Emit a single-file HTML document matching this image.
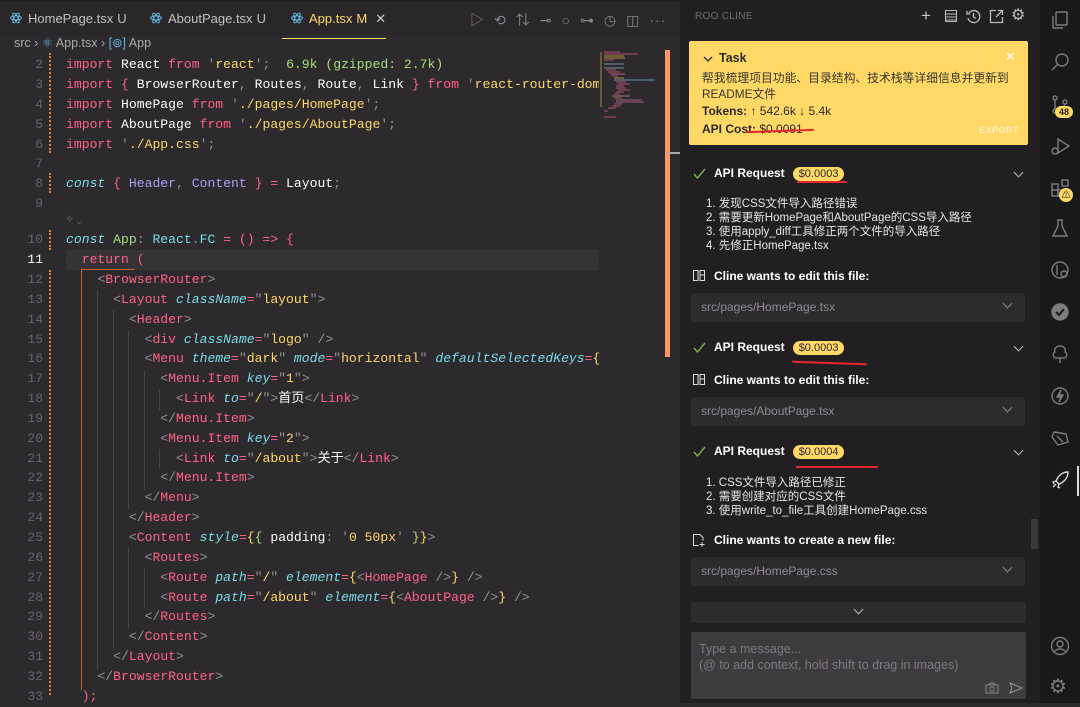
<!DOCTYPE html>
<html><head><meta charset="utf-8"><style>
*{margin:0;padding:0;box-sizing:border-box}
body{width:1080px;height:703px;overflow:hidden;background:#2d2a2e;font-family:"Liberation Sans","Noto Sans CJK SC",sans-serif;position:relative}
.abs{position:absolute}
#tabs{left:0;top:0;width:680px;height:35px;background:#2a272b;border-top:2px solid #1e1c1f}
.tab{position:absolute;top:9px;font-size:13px;color:#c1c0c0;white-space:nowrap}
.tab .u{color:#bdbdbd;margin-left:4px}
.react{display:inline-block;width:12px;height:12px;vertical-align:-1px;margin-right:6px}
#bc{left:14px;top:35px;font-size:12.5px;color:#a9a8a9}
.ln{position:absolute;left:0;width:43px;text-align:right;font-family:"Liberation Mono",monospace;font-size:13px;color:#666468;line-height:20px}
.cl{position:absolute;left:66px;font-family:"Liberation Mono","Noto Sans CJK SC",monospace;font-size:13.1px;line-height:20px;color:#fcfcfa;white-space:pre}
.k{color:#ff6188}.s{color:#ffd866}.c{color:#78dce8;font-style:italic}.p{color:#939293}.g{color:#a9dc76}.v{color:#ab9df2}.t{color:#ff6188}.o{color:#fc9867}.cy{color:#78dce8}
#panel{left:680px;top:0;width:360px;height:703px;background:#221f22}
#act{left:1040px;top:0;width:40px;height:703px;background:#19181a}
.ph{color:#fff;font-weight:bold;font-size:12px}
.pill{display:inline-block;background:#ffd866;color:#2d2a2e;font-size:11px;border-radius:9px;padding:1px 6px;margin-left:8px;font-weight:normal}
.box{position:absolute;left:691px;width:334px;height:29px;background:#2e2b2f;border-radius:2px;color:#8e8c8f;font-size:12px;padding:7px 10px}
.chev{position:absolute;width:7px;height:7px;border-right:1.3px solid #bbb;border-bottom:1.3px solid #bbb;transform:rotate(45deg)}
.ol{position:absolute;left:706px;font-size:11.5px;color:#e6e6e6;line-height:14px}
.red{position:absolute;height:2px;background:#e8262a;border-radius:2px}
.ai{position:absolute;left:1050px;width:20px;height:20px;stroke:#7c7b7d;fill:none;stroke-width:1.4}
.ck{position:absolute;left:693px}
</style></head><body>
<div id="tabs" class="abs">
 <div class="tab" style="left:10px"><svg class="react" viewBox="0 0 12 12"><g fill="none" stroke="#5fb3d9" stroke-width="1"><ellipse cx="6" cy="6" rx="5.5" ry="2.1"/><ellipse cx="6" cy="6" rx="5.5" ry="2.1" transform="rotate(60 6 6)"/><ellipse cx="6" cy="6" rx="5.5" ry="2.1" transform="rotate(120 6 6)"/></g></svg>HomePage.tsx<span class="u">U</span></div>
 <div class="tab" style="left:150px"><svg class="react" viewBox="0 0 12 12"><g fill="none" stroke="#5fb3d9" stroke-width="1"><ellipse cx="6" cy="6" rx="5.5" ry="2.1"/><ellipse cx="6" cy="6" rx="5.5" ry="2.1" transform="rotate(60 6 6)"/><ellipse cx="6" cy="6" rx="5.5" ry="2.1" transform="rotate(120 6 6)"/></g></svg>AboutPage.tsx<span class="u">U</span></div>
 <div class="tab" style="left:291px;color:#ffd866"><svg class="react" viewBox="0 0 12 12"><g fill="none" stroke="#5fb3d9" stroke-width="1"><ellipse cx="6" cy="6" rx="5.5" ry="2.1"/><ellipse cx="6" cy="6" rx="5.5" ry="2.1" transform="rotate(60 6 6)"/><ellipse cx="6" cy="6" rx="5.5" ry="2.1" transform="rotate(120 6 6)"/></g></svg>App.tsx<span class="u" style="color:#ffd866">M</span><span style="color:#ccc;margin-left:8px">✕</span></div>
 <div class="abs" style="left:470px;top:8px;color:#8a888b;font-size:14px;letter-spacing:10px;white-space:nowrap">▷⟲⇅⊸○⊶◷◫<span style="letter-spacing:1px">···</span></div>
</div>
<div class="abs" style="left:282px;top:38px;width:104px;height:1px;background:#ffd866"></div>
<div id="bc" class="abs">src › <span style="color:#5fb3d9">⚛</span> App.tsx › <span style="color:#5fb3d9">[⊚]</span> App</div>
<div class="abs" style="left:49px;top:53px;width:2px;height:100px;border-left:2px dotted #e0843c"></div>
<div class="abs" style="left:49px;top:173px;width:2px;height:20px;border-left:2px dotted #e0843c"></div>
<div class="abs" style="left:49px;top:230px;width:2px;height:20px;border-left:2px dotted #e0843c"></div>
<div class="abs" style="left:49px;top:270px;width:2px;height:425px;border-left:2px dotted #e0843c"></div>
<div class="abs" style="left:66px;top:250px;width:533px;height:20px;background:#363337"></div>
<div class="abs" style="left:81px;top:270px;width:1px;height:420px;background:#c1662f"></div>
<div class="abs" style="left:81px;top:269px;width:54px;height:1px;background:#c1662f"></div>
<div class="abs" style="left:97px;top:290px;width:1px;height:380px;background:#444"></div>
<div class="abs" style="left:113px;top:310px;width:1px;height:340px;background:#444"></div>
<div class="abs" style="left:128px;top:330px;width:1px;height:180px;background:#444"></div>
<div class="abs" style="left:144px;top:370px;width:1px;height:120px;background:#444"></div>
<div class="abs" style="left:159px;top:390px;width:1px;height:20px;background:#444"></div>
<div class="abs" style="left:159px;top:449px;width:1px;height:20px;background:#444"></div>
<div class="abs" style="left:128px;top:548px;width:1px;height:80px;background:#444"></div>
<div class="abs" style="left:144px;top:568px;width:1px;height:40px;background:#444"></div>

<div class="ln" style="top:55px">2</div><div class="cl" style="top:55px"><span class="k">import</span> React <span class="k">from</span> <span class="p">'</span><span class="s">react</span><span class="p">';</span>  <span class="g">6.9k (gzipped: 2.7k)</span></div>
<div class="ln" style="top:75px">3</div><div class="cl" style="top:75px"><span class="k">import</span> <span class="k">{</span> BrowserRouter<span class="p">,</span> Routes<span class="p">,</span> Route<span class="p">,</span> Link <span class="k">}</span> <span class="k">from</span> <span class="p">'</span><span class="s">react-router-dom</span></div>
<div class="ln" style="top:95px">4</div><div class="cl" style="top:95px"><span class="k">import</span> HomePage <span class="k">from</span> <span class="p">'</span><span class="s">./pages/HomePage</span><span class="p">';</span></div>
<div class="ln" style="top:115px">5</div><div class="cl" style="top:115px"><span class="k">import</span> AboutPage <span class="k">from</span> <span class="p">'</span><span class="s">./pages/AboutPage</span><span class="p">';</span></div>
<div class="ln" style="top:135px">6</div><div class="cl" style="top:135px"><span class="k">import</span> <span class="p">'</span><span class="s">./App.css</span><span class="p">';</span></div>
<div class="ln" style="top:154px">7</div>
<div class="ln" style="top:174px">8</div><div class="cl" style="top:174px"><span class="c">const</span> <span class="k">{</span> <span class="v">Header</span><span class="p">,</span> <span class="v">Content</span> <span class="k">}</span> <span class="k">=</span> Layout<span class="p">;</span></div>
<div class="ln" style="top:194px">9</div>
<div class="abs" style="left:66px;top:213px;font-size:11px;color:#6d6b6e">⟡ ⌄</div>
<div class="ln" style="top:230px">10</div><div class="cl" style="top:230px"><span class="c">const</span> <span class="g">App</span><span class="p">:</span> <span class="cy">React</span><span class="p">.</span><span class="cy">FC</span> <span class="k">=</span> <span class="k">()</span> <span class="k">=&gt;</span> <span class="k">{</span></div>
<div class="ln" style="top:250px;color:#fcfcfa">11</div><div class="cl" style="top:250px">  <span class="k">return</span> <span class="k">(</span></div>
<div class="ln" style="top:270px">12</div><div class="cl" style="top:270px">    <span class="p">&lt;</span><span class="t">BrowserRouter</span><span class="p">&gt;</span></div>
<div class="ln" style="top:290px">13</div><div class="cl" style="top:290px">      <span class="p">&lt;</span><span class="t">Layout</span> <span class="c">className</span><span class="k">=</span><span class="p">"</span><span class="s">layout</span><span class="p">"&gt;</span></div>
<div class="ln" style="top:310px">14</div><div class="cl" style="top:310px">        <span class="p">&lt;</span><span class="t">Header</span><span class="p">&gt;</span></div>
<div class="ln" style="top:330px">15</div><div class="cl" style="top:330px">          <span class="p">&lt;</span><span class="t">div</span> <span class="c">className</span><span class="k">=</span><span class="p">"</span><span class="s">logo</span><span class="p">" /&gt;</span></div>
<div class="ln" style="top:349px">16</div><div class="cl" style="top:349px">          <span class="p">&lt;</span><span class="t">Menu</span> <span class="c">theme</span><span class="k">=</span><span class="p">"</span><span class="s">dark</span><span class="p">"</span> <span class="c">mode</span><span class="k">=</span><span class="p">"</span><span class="s">horizontal</span><span class="p">"</span> <span class="c">defaultSelectedKeys</span><span class="k">=</span><span class="s">{</span></div>
<div class="ln" style="top:369px">17</div><div class="cl" style="top:369px">            <span class="p">&lt;</span><span class="t">Menu.Item</span> <span class="c">key</span><span class="k">=</span><span class="p">"</span><span class="s">1</span><span class="p">"&gt;</span></div>
<div class="ln" style="top:389px">18</div><div class="cl" style="top:389px">              <span class="p">&lt;</span><span class="t">Link</span> <span class="c">to</span><span class="k">=</span><span class="p">"</span><span class="s">/</span><span class="p">"&gt;</span>首页<span class="p">&lt;/</span><span class="t">Link</span><span class="p">&gt;</span></div>
<div class="ln" style="top:409px">19</div><div class="cl" style="top:409px">            <span class="p">&lt;/</span><span class="t">Menu.Item</span><span class="p">&gt;</span></div>
<div class="ln" style="top:429px">20</div><div class="cl" style="top:429px">            <span class="p">&lt;</span><span class="t">Menu.Item</span> <span class="c">key</span><span class="k">=</span><span class="p">"</span><span class="s">2</span><span class="p">"&gt;</span></div>
<div class="ln" style="top:449px">21</div><div class="cl" style="top:449px">              <span class="p">&lt;</span><span class="t">Link</span> <span class="c">to</span><span class="k">=</span><span class="p">"</span><span class="s">/about</span><span class="p">"&gt;</span>关于<span class="p">&lt;/</span><span class="t">Link</span><span class="p">&gt;</span></div>
<div class="ln" style="top:468px">22</div><div class="cl" style="top:468px">            <span class="p">&lt;/</span><span class="t">Menu.Item</span><span class="p">&gt;</span></div>
<div class="ln" style="top:488px">23</div><div class="cl" style="top:488px">          <span class="p">&lt;/</span><span class="t">Menu</span><span class="p">&gt;</span></div>
<div class="ln" style="top:508px">24</div><div class="cl" style="top:508px">        <span class="p">&lt;/</span><span class="t">Header</span><span class="p">&gt;</span></div>
<div class="ln" style="top:528px">25</div><div class="cl" style="top:528px">        <span class="p">&lt;</span><span class="t">Content</span> <span class="c">style</span><span class="k">=</span><span class="s">{</span><span class="g">{</span> padding<span class="p">:</span> <span class="p">'</span><span class="s">0 50px</span><span class="p">'</span> <span class="g">}</span><span class="s">}</span><span class="p">&gt;</span></div>
<div class="ln" style="top:548px">26</div><div class="cl" style="top:548px">          <span class="p">&lt;</span><span class="t">Routes</span><span class="p">&gt;</span></div>
<div class="ln" style="top:568px">27</div><div class="cl" style="top:568px">            <span class="p">&lt;</span><span class="t">Route</span> <span class="c">path</span><span class="k">=</span><span class="p">"</span><span class="s">/</span><span class="p">"</span> <span class="c">element</span><span class="k">=</span><span class="s">{</span><span class="p">&lt;</span><span class="t">HomePage</span> <span class="p">/&gt;</span><span class="s">}</span> <span class="p">/&gt;</span></div>
<div class="ln" style="top:588px">28</div><div class="cl" style="top:588px">            <span class="p">&lt;</span><span class="t">Route</span> <span class="c">path</span><span class="k">=</span><span class="p">"</span><span class="s">/about</span><span class="p">"</span> <span class="c">element</span><span class="k">=</span><span class="s">{</span><span class="p">&lt;</span><span class="t">AboutPage</span> <span class="p">/&gt;</span><span class="s">}</span> <span class="p">/&gt;</span></div>
<div class="ln" style="top:607px">29</div><div class="cl" style="top:607px">          <span class="p">&lt;/</span><span class="t">Routes</span><span class="p">&gt;</span></div>
<div class="ln" style="top:627px">30</div><div class="cl" style="top:627px">        <span class="p">&lt;/</span><span class="t">Content</span><span class="p">&gt;</span></div>
<div class="ln" style="top:647px">31</div><div class="cl" style="top:647px">      <span class="p">&lt;/</span><span class="t">Layout</span><span class="p">&gt;</span></div>
<div class="ln" style="top:667px">32</div><div class="cl" style="top:667px">    <span class="p">&lt;/</span><span class="t">BrowserRouter</span><span class="p">&gt;</span></div>
<div class="ln" style="top:687px">33</div><div class="cl" style="top:687px">  <span class="k">);</span></div>
<div class="abs" style="left:599px;top:40px;width:81px;height:663px;background:#2d2a2e"></div>
<svg class="abs" style="left:600px;top:50px" width="60" height="70">
<g stroke-width="1">
<line x1="1" y1="2" x2="1" y2="57" stroke="#a38a3b"/>
<line x1="4" y1="2" x2="20" y2="2" stroke="#b05070"/><line x1="4" y1="4" x2="38" y2="4" stroke="#b05070"/><line x1="4" y1="6" x2="24" y2="6" stroke="#b09040"/><line x1="4" y1="8" x2="25" y2="8" stroke="#b09040"/><line x1="4" y1="10" x2="14" y2="10" stroke="#b05070"/>
<line x1="4" y1="14" x2="24" y2="14" stroke="#6a90a0"/><line x1="4" y1="18" x2="24" y2="18" stroke="#6a90a0"/>
<line x1="6" y1="20" x2="16" y2="20" stroke="#b05070"/><line x1="8" y1="22" x2="20" y2="22" stroke="#b05070"/><line x1="10" y1="24" x2="25" y2="24" stroke="#b06070"/><line x1="12" y1="26" x2="18" y2="26" stroke="#b05070"/><line x1="14" y1="28" x2="24" y2="28" stroke="#b09040"/><line x1="14" y1="30" x2="55" y2="30" stroke="#6a90a0"/><line x1="16" y1="32" x2="26" y2="32" stroke="#b05070"/><line x1="18" y1="34" x2="30" y2="34" stroke="#b05070"/><line x1="16" y1="36" x2="24" y2="36" stroke="#b05070"/><line x1="16" y1="38" x2="26" y2="38" stroke="#b05070"/><line x1="18" y1="40" x2="30" y2="40" stroke="#b05070"/><line x1="16" y1="42" x2="24" y2="42" stroke="#b05070"/><line x1="14" y1="44" x2="20" y2="44" stroke="#b05070"/><line x1="12" y1="46" x2="30" y2="46" stroke="#a08070"/><line x1="14" y1="48" x2="22" y2="48" stroke="#b05070"/><line x1="16" y1="50" x2="42" y2="50" stroke="#a06080"/><line x1="16" y1="52" x2="44" y2="52" stroke="#a06080"/><line x1="14" y1="54" x2="22" y2="54" stroke="#b05070"/><line x1="12" y1="56" x2="20" y2="56" stroke="#b05070"/><line x1="8" y1="58" x2="16" y2="58" stroke="#b05070"/><line x1="4" y1="61" x2="8" y2="61" stroke="#b05070"/><line x1="4" y1="67" x2="16" y2="67" stroke="#b05070"/>
</g></svg>
<div class="abs" style="left:665px;top:50px;width:5px;height:307px;background:#fc9867"></div>
<div class="abs" style="left:667px;top:152px;width:13px;height:2px;background:#aaa"></div>

<div id="panel" class="abs"></div>
<div class="abs" style="left:695px;top:11px;font-size:10px;color:#6f6d70;letter-spacing:.3px">ROO CLINE</div>
<div class="abs" style="left:921px;top:6px;font-size:17px;color:#c5c5c5">+</div>
<svg class="abs" style="left:944px;top:9px" width="14" height="14" stroke="#bbb" fill="none"><rect x="1.5" y="1.5" width="11" height="11"/><line x1="2" y1="5" x2="12" y2="5"/><line x1="2" y1="8" x2="12" y2="8"/><line x1="2" y1="11" x2="12" y2="11"/></svg>
<svg class="abs" style="left:966px;top:9px" width="15" height="15" stroke="#bbb" fill="none" stroke-width="1.3"><path d="M3 4A6 6 0 1 1 2 9"/><path d="M1 2v3h3"/><path d="M7.5 4v4l2.5 1.5"/></svg>
<svg class="abs" style="left:989px;top:9px" width="15" height="15" stroke="#bbb" fill="none" stroke-width="1.3"><path d="M7 1.5H1.5v12h12V8"/><path d="M9 1.5h4.5V6M13.5 1.5L7 8"/></svg>
<div class="abs" style="left:1011px;top:5px;font-size:16px;color:#bbb">⚙</div>

<div class="abs" style="left:689px;top:41px;width:339px;height:104px;background:#ffd866;border-radius:2px"></div>
<svg class="abs" style="left:703px;top:55px" width="10" height="8" stroke="#2d2a2e" fill="none" stroke-width="1.3"><path d="M1 2l4 4 4-4"/></svg>
<div class="abs" style="left:719px;top:51px;font-size:12.5px;color:#2d2a2e;font-weight:bold">Task</div>
<div class="abs" style="left:1005px;top:49px;font-size:13px;color:#fff">✕</div>
<div class="abs" style="left:702px;top:70px;white-space:nowrap;font-size:11.8px;line-height:16px;color:#3a3530">帮我梳理项目功能、目录结构、技术栈等详细信息并更新到<br>README文件</div>
<div class="abs" style="left:702px;top:104px;font-size:12px;color:#2d2a2e"><b>Tokens:</b> ↑ 542.6k ↓ 5.4k</div>
<div class="abs" style="left:702px;top:122px;font-size:12px;color:#2d2a2e"><b>API Cost:</b> $0.0091</div>
<div class="abs" style="left:979px;top:125px;font-size:9px;color:#fff1c0;font-weight:bold;letter-spacing:.5px">EXPORT</div>
<div class="red" style="left:746px;top:130px;width:68px;transform:rotate(-2deg)"></div>

<svg class="ck" style="top:168px" width="13" height="11" stroke="#7ab34f" fill="none" stroke-width="1.4"><path d="M1 6l3.5 4L12 1"/></svg>
<div class="abs ph" style="left:714px;top:166px">API Request<span class="pill">$0.0003</span></div>
<div class="chev" style="left:1015px;top:169px"></div>
<div class="red" style="left:797px;top:181px;width:50px"></div>
<div class="ol" style="top:197px">1. 发现CSS文件导入路径错误<br>2. 需要更新HomePage和AboutPage的CSS导入路径<br>3. 使用apply_diff工具修正两个文件的导入路径<br>4. 先修正HomePage.tsx</div>
<svg class="abs" style="left:693px;top:270px" width="12" height="11" stroke="#ddd" fill="none"><rect x="0.5" y="0.5" width="4.5" height="10"/><rect x="7" y="0.5" width="4.5" height="10"/><line x1="7" y1="5" x2="11.5" y2="5"/></svg>
<div class="abs ph" style="left:714px;top:269px">Cline wants to edit this file:</div>
<div class="box" style="top:293px">src/pages/HomePage.tsx</div><div class="chev" style="left:1004px;top:300px;border-color:#888"></div>

<svg class="ck" style="top:342px" width="13" height="11" stroke="#7ab34f" fill="none" stroke-width="1.4"><path d="M1 6l3.5 4L12 1"/></svg>
<div class="abs ph" style="left:714px;top:340px">API Request<span class="pill">$0.0003</span></div>
<div class="chev" style="left:1015px;top:343px"></div>
<div class="red" style="left:792px;top:362px;width:75px;transform:rotate(2deg)"></div>
<svg class="abs" style="left:693px;top:374px" width="12" height="11" stroke="#ddd" fill="none"><rect x="0.5" y="0.5" width="4.5" height="10"/><rect x="7" y="0.5" width="4.5" height="10"/><line x1="7" y1="5" x2="11.5" y2="5"/></svg>
<div class="abs ph" style="left:714px;top:373px">Cline wants to edit this file:</div>
<div class="box" style="top:397px">src/pages/AboutPage.tsx</div><div class="chev" style="left:1004px;top:404px;border-color:#888"></div>

<svg class="ck" style="top:446px" width="13" height="11" stroke="#7ab34f" fill="none" stroke-width="1.4"><path d="M1 6l3.5 4L12 1"/></svg>
<div class="abs ph" style="left:714px;top:444px">API Request<span class="pill">$0.0004</span></div>
<div class="chev" style="left:1015px;top:447px"></div>
<div class="red" style="left:796px;top:466px;width:82px"></div>
<div class="ol" style="top:476px">1. CSS文件导入路径已修正<br>2. 需要创建对应的CSS文件<br>3. 使用write_to_file工具创建HomePage.css</div>
<svg class="abs" style="left:693px;top:534px" width="12" height="13" stroke="#ddd" fill="none"><path d="M7 .5H.5v11h5M7 .5l3 3v3"/><path d="M9 8v5M6.5 10.5h5"/></svg>
<div class="abs ph" style="left:714px;top:533px">Cline wants to create a new file:</div>
<div class="box" style="top:557px">src/pages/HomePage.css</div><div class="chev" style="left:1004px;top:564px;border-color:#888"></div>
<div class="abs" style="left:1031px;top:519px;width:7px;height:30px;background:#3a383b"></div>

<div class="abs" style="left:691px;top:602px;width:335px;height:21px;background:#2e2b2f;border-radius:2px"></div>
<div class="chev" style="left:855px;top:606px"></div>
<div class="abs" style="left:691px;top:632px;width:335px;height:67px;background:#3e3b3f;border-radius:2px"></div>
<div class="abs" style="left:699px;top:641px;font-size:12.5px;line-height:16px;color:#7c7a7d">Type a message...<br>(@ to add context, hold shift to drag in images)</div>
<svg class="abs" style="left:985px;top:682px" width="14" height="12" stroke="#888" fill="none"><rect x="1" y="3" width="12" height="8"/><circle cx="7" cy="7" r="2.3"/><path d="M4 3l1-2h4l1 2"/></svg>
<svg class="abs" style="left:1009px;top:682px" width="14" height="12" stroke="#999" fill="none"><path d="M1 1l12 5-12 5 2-5z"/></svg>

<div id="act" class="abs"></div>
<svg class="ai" style="top:10px"><rect x="6" y="2" width="11" height="13" rx="1"/><path d="M3 6v12h10"/></svg>
<svg class="ai" style="top:52px"><circle cx="12" cy="8" r="6"/><path d="M8 12l-6 6"/></svg>
<svg class="ai" style="top:94px"><circle cx="5" cy="4" r="2"/><circle cx="5" cy="17" r="2"/><circle cx="15" cy="8" r="2"/><path d="M5 6v9M15 10c0 4-8 3-9 6"/></svg>
<div class="abs" style="left:1055px;top:106px;background:#ffd866;color:#222;font-size:9px;font-weight:bold;border-radius:7px;padding:1px 4px">48</div>
<svg class="ai" style="top:136px"><path d="M8 3l11 7-11 7z"/><circle cx="5" cy="15" r="3"/></svg>
<svg class="ai" style="top:178px"><rect x="2" y="6" width="6" height="6"/><rect x="2" y="12" width="6" height="6"/><rect x="8" y="12" width="6" height="6"/><rect x="12" y="2" width="6" height="6"/></svg>
<div class="abs" style="left:1059px;top:188px;width:14px;height:14px;background:#ffd866;border-radius:50%;font-size:9px;text-align:center;line-height:14px;color:#222">⚠</div>
<svg class="ai" style="top:218px"><path d="M7 2h6M8 2v6l-5 10h14l-5-10V2"/></svg>
<svg class="ai" style="top:260px"><circle cx="10" cy="10" r="8"/><circle cx="14" cy="14" r="3"/><path d="M7 5v10"/></svg>
<svg class="ai" style="top:302px"><circle cx="10" cy="10" r="8" fill="#7c7b7d"/><path d="M6 10l3 3 5-6" stroke="#19181a" stroke-width="2"/></svg>
<svg class="ai" style="top:344px"><path d="M10 2c4 0 6 3 5 6 3 1 2 6-2 6H7c-4 0-5-5-2-6-1-3 1-6 5-6zM10 14v5"/></svg>
<svg class="ai" style="top:386px"><circle cx="10" cy="10" r="8"/><path d="M11 4l-4 7h4l-2 5 4-7H9z" fill="#7c7b7d"/></svg>
<svg class="ai" style="top:428px"><path d="M4 4l12 2 2 8-10 3-6-8z"/><path d="M7 8l6 6"/></svg>
<svg class="ai" style="top:470px;stroke:#ddd"><path d="M18 2c-6 0-10 4-12 9l3 3c5-2 9-6 9-12zM6 11l-3 1 1 2M9 14l-1 3 2 1M3 17l3-3"/></svg>
<div class="abs" style="left:1077px;top:466px;width:2px;height:30px;background:#ddd"></div>
<svg class="ai" style="top:636px"><circle cx="10" cy="10" r="8.5"/><circle cx="10" cy="8" r="3"/><path d="M4 16c3-4 9-4 12 0"/></svg>
<div class="abs" style="left:1049px;top:674px;font-size:20px;color:#7c7b7d">⚙</div>
</body></html>
